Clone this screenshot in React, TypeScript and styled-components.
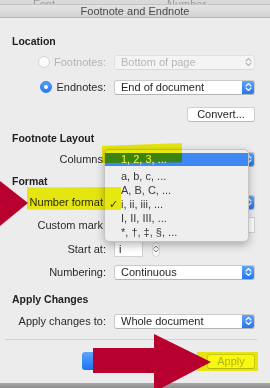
import React from "react";
import styled, { createGlobalStyle } from "styled-components";

const GlobalStyle = createGlobalStyle`
  html, body {
    margin: 0;
    padding: 0;
  }
  body {
    font-family: "Liberation Sans", Arial, sans-serif;
    font-size: 11px;
    color: #262626;
    background: #8e8e8e;
  }
`;

const Chevrons = ({ color }: { color: string }) => (
    <svg width="7" height="10" viewBox="0 0 7 10">
        <path d="M1 4 L3.5 1.5 L6 4" fill="none" stroke={color} strokeWidth="1.1" strokeLinecap="round" strokeLinejoin="round" />
        <path d="M1 6 L3.5 8.5 L6 6" fill="none" stroke={color} strokeWidth="1.1" strokeLinecap="round" strokeLinejoin="round" />
    </svg>
);

const PopUp = ({ value, disabled }: { value: string; disabled?: boolean }) => (
    <PopBox $disabled={disabled}>
        <PopText>{value}</PopText>
        <Stepper $disabled={disabled}>
            <Chevrons color={disabled ? "#b8b8b8" : "#ffffff"} />
        </Stepper>
    </PopBox>
);

const menuItems = ["1, 2, 3, ...", "a, b, c, ...", "A, B, C, ...", "i, ii, iii, ...", "I, II, III, ...", "*, †, ‡, §, ..."];

const App = () => {
    return (
        <>
            <GlobalStyle />
            <Frame>
                <TopStrip>
                    <Ghost $left={33}>Font</Ghost>
                    <Ghost $left={112}>Number</Ghost>
                </TopStrip>
                <TitleBar>Footnote and Endnote</TitleBar>
                <Body>
                    <Heading $mt={0}>Location</Heading>
                    <Row $mt={6}>
                        <Label $disabled>
                            <Radio $disabled />
                            Footnotes:
                        </Label>
                        <PopUp value="Bottom of page" disabled />
                    </Row>
                    <Row $mt={9}>
                        <Label>
                            <Radio $checked />
                            Endnotes:
                        </Label>
                        <PopUp value="End of document" />
                    </Row>
                    <Row $mt={11}>
                        <span />
                        <PushButton>Convert...</PushButton>
                    </Row>

                    <Heading $mt={9}>Footnote Layout</Heading>
                    <Row $mt={6}>
                        <Label>Columns:</Label>
                        <PopUp value="1" />
                    </Row>

                    <Heading $mt={7}>Format</Heading>
                    <Row $mt={6}>
                        <Label>Number format:</Label>
                        <PopUp value="1, 2, 3, ..." />
                    </Row>
                    <Row $mt={7}>
                        <Label>Custom mark:</Label>
                        <TextField $width={141} />
                    </Row>
                    <Row $mt={8}>
                        <Label>Start at:</Label>
                        <FieldGroup>
                            <TextField $width={29}>i</TextField>
                            <SmallStepper>
                                <Chevrons color="#7a7a7a" />
                            </SmallStepper>
                        </FieldGroup>
                    </Row>
                    <Row $mt={7}>
                        <Label>Numbering:</Label>
                        <PopUp value="Continuous" />
                    </Row>

                    <Heading $mt={12}>Apply Changes</Heading>
                    <Row $mt={7}>
                        <Label>Apply changes to:</Label>
                        <PopUp value="Whole document" />
                    </Row>
                </Body>
                <Separator />
                <Footer>
                    <DefaultButton>Insert</DefaultButton>
                    <PushButton $disabled style={{ width: 48 }}>Apply</PushButton>
                </Footer>
                <Shadow />

                <Menu>
                    {menuItems.map((item, i) => (
                        <MenuItem key={item} $active={i === 0}>
                            {i === 3 && <Check>✓</Check>}
                            {item}
                        </MenuItem>
                    ))}
                </Menu>

                <Highlight $x={102} $y={143} $w={80} $h={20} $clip="polygon(0 15%, 100% 0, 100% 96%, 0 100%)" />
                <Highlight $x={27} $y={187} $w={94} $h={23} $clip="polygon(0 2%, 100% 0, 100% 100%, 0 98%)" />
                <Highlight $x={197} $y={352} $w={61} $h={19} $clip="none" />

                <Arrows width="270" height="388" viewBox="0 0 270 388">
                    <polygon points="0,181 28,203 0,226" fill="#b8002e" />
                    <polygon points="93,348 154,348 154,334 211,362 154,392 154,373 93,373" fill="#b8002e" />
                </Arrows>
            </Frame>
        </>
    );
};
export default App;

const Frame = styled.div`
    position: relative;
    width: 270px;
    height: 388px;
    overflow: hidden;
    display: flex;
    flex-direction: column;
    background: #ececec;
`;

const TopStrip = styled.div`
    height: 4px;
    flex-shrink: 0;
    display: flex;
    align-items: flex-end;
    overflow: hidden;
    background: #d9d9d9;
`;

const Ghost = styled.span<{ $left: number }>`
    margin-left: ${(p) => p.$left}px;
    font-size: 11px;
    line-height: 11px;
    margin-bottom: -6px;
    color: #9a9a9a;
`;

const TitleBar = styled.div`
    height: 14px;
    flex-shrink: 0;
    box-sizing: border-box;
    border-top: 1px solid #c2c2c2;
    border-bottom: 1px solid #b4b4b4;
    background: linear-gradient(#e4e4e4, #d3d3d3);
    text-align: center;
    line-height: 12px;
    font-size: 11px;
    color: #4a4a4a;
`;

const Body = styled.div`
    display: flex;
    flex-direction: column;
    padding: 16px 15px 0 12px;
`;

const Heading = styled.div<{ $mt: number }>`
    height: 14px;
    line-height: 14px;
    margin-top: ${(p) => p.$mt}px;
    font-weight: bold;
    font-size: 10.5px;
    color: #222;
`;

const Row = styled.div<{ $mt: number }>`
    display: grid;
    grid-template-columns: 94px 141px;
    column-gap: 8px;
    height: 16px;
    align-items: center;
    margin-top: ${(p) => p.$mt}px;
`;

const Label = styled.div<{ $disabled?: boolean }>`
    display: flex;
    justify-content: flex-end;
    align-items: center;
    gap: 4px;
    white-space: nowrap;
    color: ${(p) => (p.$disabled ? "#b4b4b4" : "#2a2a2a")};
`;

const Radio = styled.span<{ $checked?: boolean; $disabled?: boolean }>`
    position: relative;
    width: 12px;
    height: 12px;
    box-sizing: border-box;
    border-radius: 50%;
    border: 1px solid ${(p) => (p.$checked ? "#2f7ff5" : "#d4d4d4")};
    background: ${(p) => (p.$checked ? "linear-gradient(#5a9ef8, #2a78f4)" : "#fbfbfb")};
    &::after {
        content: "";
        display: ${(p) => (p.$checked ? "block" : "none")};
        position: absolute;
        left: 3px;
        top: 3px;
        width: 4px;
        height: 4px;
        border-radius: 50%;
        background: #fff;
    }
`;

const PopBox = styled.div<{ $disabled?: boolean }>`
    display: flex;
    align-items: center;
    height: 15px;
    box-sizing: border-box;
    background: ${(p) => (p.$disabled ? "#f4f4f4" : "#ffffff")};
    border: 1px solid ${(p) => (p.$disabled ? "#e0e0e0" : "#cacaca")};
    border-bottom-color: ${(p) => (p.$disabled ? "#dadada" : "#b4b4b4")};
    border-radius: 3px;
    color: ${(p) => (p.$disabled ? "#b6b6b6" : "#262626")};
    overflow: hidden;
`;

const PopText = styled.span`
    flex: 1;
    padding-left: 6px;
    white-space: nowrap;
    line-height: 13px;
`;

const Stepper = styled.span<{ $disabled?: boolean }>`
    width: 13px;
    height: 15px;
    margin: -1px -1px -1px 0;
    display: flex;
    align-items: center;
    justify-content: center;
    border-radius: 0 3px 3px 0;
    background: ${(p) => (p.$disabled ? "transparent" : "linear-gradient(#64a6f8, #1f73f2)")};
`;

const PushButton = styled.div<{ $disabled?: boolean }>`
    justify-self: end;
    width: 68px;
    height: 15px;
    box-sizing: border-box;
    background: #fff;
    border: 1px solid #d0d0d0;
    border-bottom-color: #bababa;
    border-radius: 3px;
    text-align: center;
    line-height: 13px;
    color: ${(p) => (p.$disabled ? "#b9b9b9" : "#262626")};
`;

const DefaultButton = styled.div`
    width: 98px;
    height: 18px;
    border-radius: 3px;
    background: linear-gradient(#5ea4f9, #1c72f2);
    color: #fff;
    text-align: center;
    line-height: 18px;
`;

const TextField = styled.div<{ $width: number }>`
    width: ${(p) => p.$width}px;
    height: 16px;
    box-sizing: border-box;
    background: #fff;
    border: 1px solid #d2d2d2;
    padding-left: 4px;
    line-height: 14px;
`;

const FieldGroup = styled.div`
    display: flex;
    align-items: center;
    gap: 9px;
`;

const SmallStepper = styled.span`
    width: 8px;
    height: 15px;
    display: flex;
    align-items: center;
    justify-content: center;
    border-radius: 4px;
    background: #f6f6f6;
    border: 1px solid #d6d6d6;
    box-sizing: border-box;
`;

const Separator = styled.div`
    height: 1px;
    margin: 10px 13px 0 5px;
    background: #d3d3d3;
`;

const Footer = styled.div`
    display: flex;
    justify-content: flex-end;
    align-items: center;
    gap: 27px;
    height: 18px;
    margin-top: 12px;
    padding-right: 15px;
`;

const Shadow = styled.div`
    margin-top: auto;
    height: 5px;
    background: linear-gradient(#a9a9a9, #8a8a8a);
`;

const Menu = styled.div`
    position: absolute;
    left: 104px;
    top: 149px;
    width: 145px;
    padding: 3px 0 2px;
    box-sizing: border-box;
    background: #eeeeee;
    border: 0.5px solid #c4c4c4;
    border-radius: 5px;
    box-shadow: 0 3px 9px rgba(0, 0, 0, 0.28);
`;

const MenuItem = styled.div<{ $active?: boolean }>`
    position: relative;
    height: ${(p) => (p.$active ? 13 : 14)}px;
    line-height: ${(p) => (p.$active ? 13 : 14)}px;
    margin-bottom: ${(p) => (p.$active ? 3 : 0)}px;
    padding-left: 16px;
    white-space: nowrap;
    color: ${(p) => (p.$active ? "#ffffff" : "#3a3a3a")};
    background: ${(p) => (p.$active ? "#3d88f4" : "transparent")};
`;

const Check = styled.span`
    position: absolute;
    left: 4px;
    top: 0;
    color: #333;
`;

const Highlight = styled.div<{ $x: number; $y: number; $w: number; $h: number; $clip: string }>`
    position: absolute;
    left: ${(p) => p.$x}px;
    top: ${(p) => p.$y}px;
    width: ${(p) => p.$w}px;
    height: ${(p) => p.$h}px;
    background: #f8f812;
    mix-blend-mode: multiply;
    clip-path: ${(p) => p.$clip};
`;

const Arrows = styled.svg`
    position: absolute;
    left: 0;
    top: 0;
    pointer-events: none;
`;
